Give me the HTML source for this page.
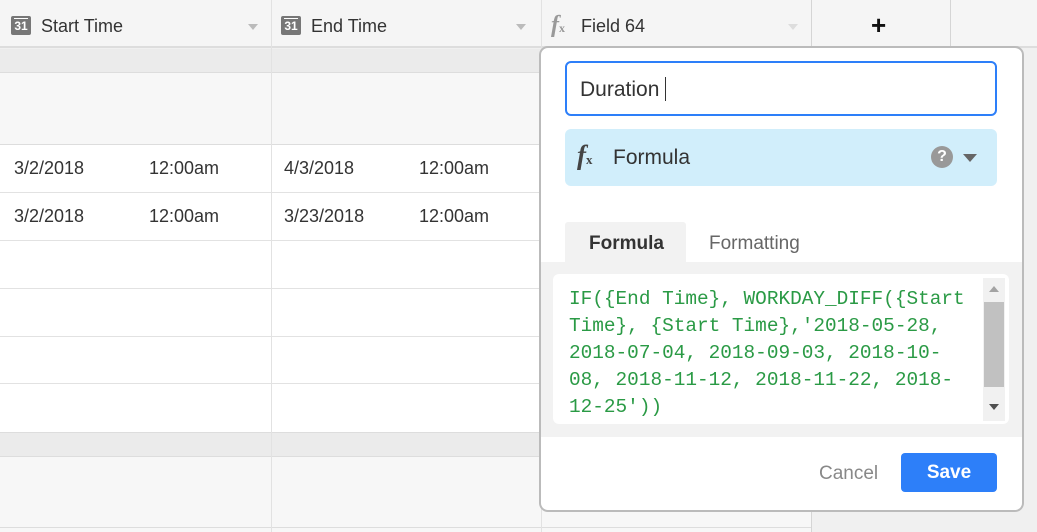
<!DOCTYPE html>
<html><head><meta charset="utf-8"><style>
*{margin:0;padding:0;box-sizing:border-box}
body{width:1037px;height:532px;overflow:hidden;background:#f0f0f0;font-family:"Liberation Sans",sans-serif;position:relative;color:#333}
.a{position:absolute}
.hd{top:0;height:48px;background:#f5f5f5;border-bottom:2px solid #ddd}
.vl{position:absolute;width:1px;background:#e2e2e2}
.hl{position:absolute;height:1px;background:#e2e2e2;left:0;width:811px}
.ht{position:absolute;top:16px;font-size:18px;color:#333}
.cal{position:absolute;top:16px;width:20px;height:19px;background:#777;border-radius:2px;color:#fff;font-size:12px;font-weight:bold;text-align:center;line-height:21px}
.cal:before{content:"";position:absolute;left:3px;right:3px;top:2px;height:1px;background:#fff}
.tri{position:absolute;top:24px;width:0;height:0;border-left:5px solid transparent;border-right:5px solid transparent;border-top:6px solid #bbb}
.c{position:absolute;font-size:18px;color:#333}
.mono{font-family:"Liberation Mono",monospace;font-size:19.4px;color:#2a9a45;white-space:pre;line-height:27px}
</style></head><body>
<div class="a hd" style="left:0;width:1037px"></div>
<div class="a" style="left:0;top:49px;width:811px;height:23px;background:#ebebeb"></div>
<div class="a" style="left:0;top:72px;width:811px;height:73px;background:#f7f7f7"></div>
<div class="a" style="left:0;top:145px;width:811px;height:287px;background:#fff"></div>
<div class="a" style="left:0;top:432px;width:811px;height:24px;background:#ebebeb"></div>
<div class="a" style="left:0;top:456px;width:811px;height:76px;background:#f7f7f7"></div>
<div class="hl" style="top:72px;background:#ddd"></div>
<div class="hl" style="top:144px;background:#ddd"></div>
<div class="hl" style="top:192px"></div>
<div class="hl" style="top:240px"></div>
<div class="hl" style="top:288px"></div>
<div class="hl" style="top:336px"></div>
<div class="hl" style="top:383px"></div>
<div class="hl" style="top:432px;background:#ddd"></div>
<div class="hl" style="top:456px;background:#ddd"></div>
<div class="hl" style="top:527px;background:#ddd"></div>
<div class="vl" style="left:271px;top:0;height:532px"></div>
<div class="vl" style="left:541px;top:0;height:532px"></div>
<div class="vl" style="left:811px;top:0;height:532px;background:#d5d5d5"></div>
<div class="vl" style="left:950px;top:0;height:48px;background:#d5d5d5"></div>

<div class="cal" style="left:11px">31</div><div class="ht" style="left:41px">Start Time</div><div class="tri" style="left:248px"></div>
<div class="cal" style="left:281px">31</div><div class="ht" style="left:311px">End Time</div><div class="tri" style="left:516px"></div>
<div class="ht" style="left:551px;top:12px;font-family:'Liberation Serif',serif;font-style:italic;font-weight:bold;color:#999;font-size:24px">f<span style="font-size:12px;font-style:normal">x</span></div>
<div class="ht" style="left:581px">Field 64</div><div class="tri" style="left:788px;border-top-color:#ddd"></div>
<div class="ht" style="left:871px;top:10px;font-size:26px;font-weight:bold;color:#111">+</div>

<div class="c" style="left:14px;top:158px">3/2/2018</div><div class="c" style="left:149px;top:158px">12:00am</div>
<div class="c" style="left:284px;top:158px">4/3/2018</div><div class="c" style="left:419px;top:158px">12:00am</div>
<div class="c" style="left:14px;top:206px">3/2/2018</div><div class="c" style="left:149px;top:206px">12:00am</div>
<div class="c" style="left:284px;top:206px">3/23/2018</div><div class="c" style="left:419px;top:206px">12:00am</div>

<div class="a" style="left:539px;top:46px;width:485px;height:466px;background:#fff;border:2px solid #bbb;border-radius:9px;overflow:hidden">
 <div class="a" style="left:24px;top:13px;width:432px;height:55px;border:2px solid #2d7ff9;border-radius:6px;font-size:21px;padding:14px 0 0 13px;color:#333">Duration <span style="display:inline-block;width:1px;height:24px;background:#333;vertical-align:-5px"></span></div>
 <div class="a" style="left:24px;top:81px;width:432px;height:57px;background:#d1eefb;border-radius:6px">
  <div class="a" style="left:12px;top:13px;font-family:'Liberation Serif',serif;font-style:italic;font-weight:bold;color:#444;font-size:27px;line-height:27px">f<span style="font-size:13px;font-style:normal">x</span></div>
  <div class="a" style="left:48px;top:17px;font-size:21px;color:#333">Formula</div>
  <div class="a" style="left:366px;top:17px;width:22px;height:22px;border-radius:50%;background:#999;color:#fff;font-weight:bold;font-size:16px;text-align:center;line-height:22px">?</div>
  <div class="a" style="left:398px;top:25px;border-left:7px solid transparent;border-right:7px solid transparent;border-top:8px solid #666"></div>
 </div>
 <div class="a" style="left:0;top:214px;width:485px;height:175px;background:#f2f2f2"></div>
 <div class="a" style="left:24px;top:174px;width:121px;height:41px;background:#f2f2f2;border-radius:3px 3px 0 0"></div>
 <div class="a" style="left:48px;top:185px;font-size:19px;font-weight:bold;color:#333">Formula</div>
 <div class="a" style="left:168px;top:185px;font-size:19px;color:#666">Formatting</div>
 <div class="a" style="left:12px;top:226px;width:456px;height:150px;background:#fff;border-radius:6px;overflow:hidden">
  <div class="a mono" style="left:16px;top:12px">IF({End Time}, WORKDAY_DIFF({Start
Time}, {Start Time},'2018-05-28,
2018-07-04, 2018-09-03, 2018-10-
08, 2018-11-12, 2018-11-22, 2018-
12-25'))</div>
  <div class="a" style="left:430px;top:4px;width:22px;height:143px;background:#f1f1f1"></div>
  <div class="a" style="left:431px;top:28px;width:20px;height:85px;background:#c1c1c1"></div>
  <div class="a" style="left:436px;top:12px;border-left:5px solid transparent;border-right:5px solid transparent;border-bottom:6px solid #a3a3a3"></div>
  <div class="a" style="left:436px;top:130px;border-left:5px solid transparent;border-right:5px solid transparent;border-top:6px solid #505050"></div>
 </div>
 <div class="a" style="left:278px;top:415px;font-size:19px;color:#888">Cancel</div>
 <div class="a" style="left:360px;top:405px;width:96px;height:39px;background:#2d7ff9;border-radius:4px;color:#fff;font-weight:bold;font-size:19px;text-align:center;line-height:39px">Save</div>
</div>
</body></html>
